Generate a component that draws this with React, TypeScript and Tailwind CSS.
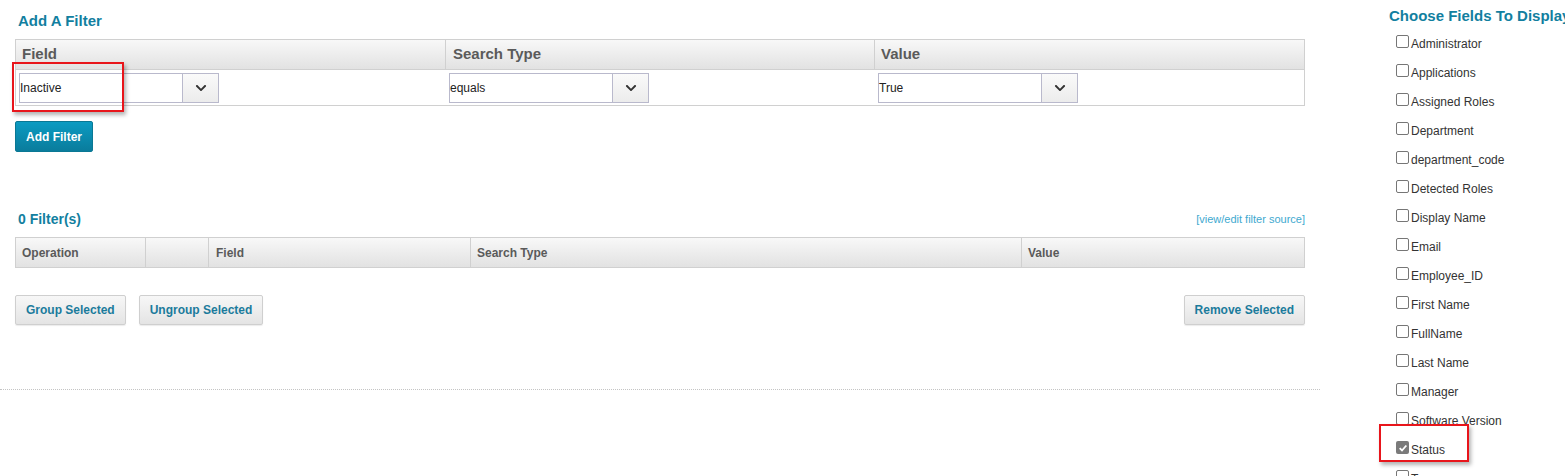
import { FaChevronDown } from "react-icons/fa";

const fields = [
  "Administrator",
  "Applications",
  "Assigned Roles",
  "Department",
  "department_code",
  "Detected Roles",
  "Display Name",
  "Email",
  "Employee_ID",
  "First Name",
  "FullName",
  "Last Name",
  "Manager",
  "Software Version",
  "Status",
  "Type",
];

function Select({ value }: { value: string }) {
  return (
    <div className="flex h-[30px] w-[200px] border border-[#b9b9cc] bg-white">
      <div className="flex flex-1 items-center text-[12px] text-[#222]">{value}</div>
      <div className="flex w-[36px] items-center justify-center border-l border-[#b9b9cc] bg-gradient-to-b from-[#fafafa] to-[#ececec]">
        <FaChevronDown className="text-[#333]" size={12} />
      </div>
    </div>
  );
}

function GrayButton({ label }: { label: string }) {
  return (
    <button className="h-[30px] rounded-[2px] border border-[#cfcfcf] bg-gradient-to-b from-[#f7f7f7] to-[#e4e4e4] px-[10px] text-[12px] font-bold text-[#1b7b9c] shadow-[0_1px_1px_rgba(0,0,0,0.08)]">
      {label}
    </button>
  );
}

export default function App() {
  return (
    <div className="flex h-[476px] w-[1565px] overflow-hidden bg-white font-['Liberation_Sans',Arial,sans-serif]">
      {/* left area */}
      <div className="flex w-[1320px] shrink-0 flex-col">
        <div className="px-[15px]">
          <h2 className="mt-[12px] pl-[3px] text-[15px] font-bold leading-[18px] text-[#127fa0]">Add A Filter</h2>

          <div className="relative mt-[9px] border border-[#d0d0d0]">
            <div className="grid h-[29px] grid-cols-[429px_429px_1fr] bg-gradient-to-b from-[#f8f8f8] to-[#e2e2e2]">
              <div className="flex items-center px-[6px] text-[15px] font-bold text-[#5a5a5a]">Field</div>
              <div className="flex items-center border-l border-[#d0d0d0] px-[7px] text-[15px] font-bold text-[#5a5a5a]">Search Type</div>
              <div className="flex items-center border-l border-[#d0d0d0] px-[6px] text-[15px] font-bold text-[#5a5a5a]">Value</div>
            </div>
            <div className="grid h-[36px] grid-cols-[429px_429px_1fr] items-center border-t border-[#d0d0d0]">
              <div className="pl-[3px]">
                <Select value="Inactive" />
              </div>
              <div className="pl-[4px]">
                <Select value="equals" />
              </div>
              <div className="pl-[4px]">
                <Select value="True" />
              </div>
            </div>
            <div className="pointer-events-none absolute left-[-4px] top-[22px] h-[50px] w-[112px] border-2 border-[#e8151b] shadow-[2px_3px_4px_rgba(0,0,0,0.3)]" />
          </div>

          <button className="mt-[15px] h-[31px] w-[78px] rounded-[2px] border border-[#0a7894] bg-gradient-to-b from-[#0c9bc2] to-[#0a7c9c] text-[12px] font-bold text-white">
            Add Filter
          </button>

          <div className="mt-[58px] flex items-center justify-between">
            <h2 className="pl-[3px] text-[14px] font-bold leading-[18px] text-[#127fa0]">0 Filter(s)</h2>
            <a className="text-[11px] text-[#3ea9cf]">[view/edit filter source]</a>
          </div>

          <div className="mt-[9px] grid h-[31px] grid-cols-[129px_63px_262px_551px_1fr] border border-[#d0d0d0] bg-gradient-to-b from-[#f8f8f8] to-[#e2e2e2] text-[12px] font-bold text-[#5a5a5a]">
            <div className="flex items-center px-[6px]">Operation</div>
            <div className="border-l border-[#d0d0d0]" />
            <div className="flex items-center border-l border-[#d0d0d0] px-[7px]">Field</div>
            <div className="flex items-center border-l border-[#d0d0d0] px-[6px]">Search Type</div>
            <div className="flex items-center border-l border-[#d0d0d0] px-[6px]">Value</div>
          </div>

          <div className="mt-[27px] flex items-center">
            <GrayButton label="Group Selected" />
            <div className="ml-[13px]">
              <GrayButton label="Ungroup Selected" />
            </div>
            <div className="ml-auto">
              <GrayButton label="Remove Selected" />
            </div>
          </div>
        </div>

        <div className="mt-[64px] border-t border-dotted border-[#c4c4c4]" />
      </div>

      {/* right area */}
      <div className="flex min-w-0 flex-1 flex-col pl-[69px]">
        <h2 className="mt-[7px] whitespace-nowrap text-[15px] font-bold leading-[18px] text-[#127fa0]">Choose Fields To Display</h2>
        <ul className="mt-[4px] pl-[7px]">
          {fields.map((f) => (
            <li key={f} className="relative flex h-[29px] items-center text-[12px] text-[#333]">
              {f === "Status" ? (
                <span className="mb-[4px] flex h-[13px] w-[13px] items-center justify-center rounded-[2px] bg-[#7a7a7a]">
                  <svg viewBox="0 0 12 12" className="h-[10px] w-[10px]">
                    <path d="M2 6.2 L4.8 9 L10 3" fill="none" stroke="white" strokeWidth="2.2" />
                  </svg>
                </span>
              ) : (
                <span className="mb-[4px] h-[13px] w-[13px] rounded-[2px] border border-[#767676] bg-white" />
              )}
              <span className="ml-[2px]">{f}</span>
              {f === "Status" && (
                <div className="pointer-events-none absolute left-[-17px] top-[-11px] h-[38px] w-[90px] border-2 border-[#e8151b] shadow-[2px_3px_4px_rgba(0,0,0,0.3)]" />
              )}
            </li>
          ))}
        </ul>
      </div>
    </div>
  );
}
